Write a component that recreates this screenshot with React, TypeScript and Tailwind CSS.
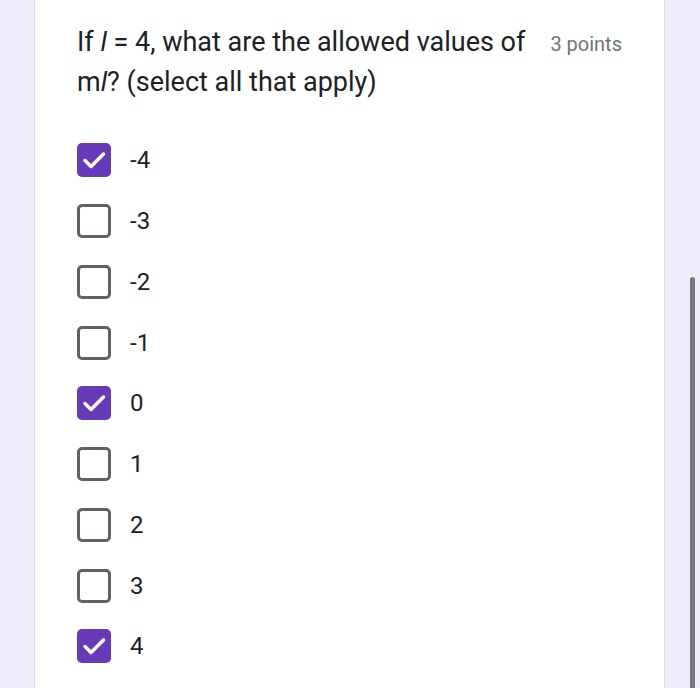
import React from "react";

const options: { label: string; checked: boolean }[] = [
  { label: "-4", checked: true },
  { label: "-3", checked: false },
  { label: "-2", checked: false },
  { label: "-1", checked: false },
  { label: "0", checked: true },
  { label: "1", checked: false },
  { label: "2", checked: false },
  { label: "3", checked: false },
  { label: "4", checked: true },
];

function Box({ checked }: { checked: boolean }) {
  if (checked) {
    return (
      <div className="w-[34px] h-[34px] rounded-[5px] bg-[#673ab7] shrink-0">
        <svg width="34" height="34" viewBox="0 0 34 34" fill="none">
          <path d="M8 17.5l6 6L26.5 11" stroke="white" strokeWidth="3.5" strokeLinecap="round" strokeLinejoin="round" />
        </svg>
      </div>
    );
  }
  return <div className="w-[34px] h-[34px] rounded-[5px] border-[3px] border-[#5f6368] shrink-0" />;
}

export default function App() {
  return (
    <div className="w-[700px] h-[688px] overflow-hidden flex bg-[#f0ebf8] relative" style={{ fontFamily: "Roboto, 'Liberation Sans', sans-serif" }}>
      <div className="w-[35px] shrink-0 border-r border-[#ddd8e6]" />
      <div className="flex-1 bg-white pl-[42px] pr-[42px] pt-[22px]">
        <div className="flex items-start">
          <div className="flex-1 text-[27px] leading-[40px] text-[#202124]">
            If <i>l</i> = 4, what are the allowed values of m<i>l</i>? (select all that apply)
          </div>
          <div className="text-[20px] leading-[40px] text-[#70757a] pt-[2px] ml-[14px] whitespace-nowrap">3 points</div>
        </div>
        <div className="mt-[28px] flex flex-col">
          {options.map((o) => (
            <div key={o.label} className="h-[60.75px] flex items-center">
              <Box checked={o.checked} />
              <span className="ml-[19px] text-[24px] text-[#202124]">{o.label}</span>
            </div>
          ))}
        </div>
      </div>
      <div className="w-[36px] shrink-0 border-l border-[#ddd8e6] relative">
        <div className="absolute left-[25px] top-[277px] w-[5px] h-[420px] rounded-full bg-[#7b7782]" />
      </div>
    </div>
  );
}
